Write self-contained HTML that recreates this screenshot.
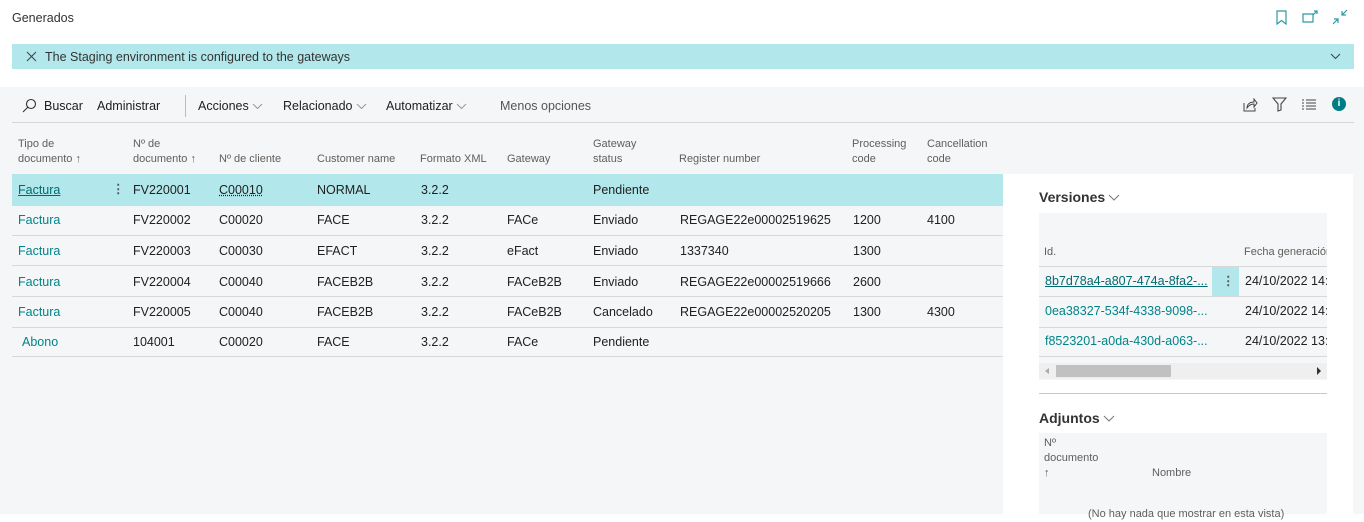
<!DOCTYPE html>
<html><head><meta charset="utf-8"><style>
*{margin:0;padding:0;box-sizing:border-box}
body{width:1364px;height:514px;overflow:hidden;background:#fff;font-family:"Liberation Sans",sans-serif;color:#212121;position:relative;font-size:12.5px}
.a{position:absolute;white-space:nowrap}
.h{color:#605e5c;font-size:11px;line-height:15px}
.lnk{color:#008489}
.t{font-size:12.5px}
.cv{display:inline-block;vertical-align:middle;margin-left:3px}
</style></head><body>
<div class="a" style="left:12px;top:11px;font-size:12.5px;color:#333">Generados</div>
<svg class="a" style="left:1275px;top:10px" width="14" height="15" viewBox="0 0 14 15"><path d="M2 1h9v13l-4.5-3.5L2 14z" fill="none" stroke="#2b9aa3" stroke-width="1.2"/></svg>
<svg class="a" style="left:1302px;top:10px" width="16" height="14" viewBox="0 0 16 14"><path d="M1 4h10v8H1z M12 1l3 0 0 3 M15 1l-4 4" fill="none" stroke="#2b9aa3" stroke-width="1.2"/></svg>
<svg class="a" style="left:1332px;top:9px" width="16" height="16" viewBox="0 0 16 16"><path d="M15 1l-5 5 M10 2v4h4 M1 15l5-5 M6 14v-4H2" fill="none" stroke="#2b9aa3" stroke-width="1.2"/></svg>
<div class="a" style="left:12px;top:44px;width:1342px;height:25px;background:#b2e8ec"></div>
<svg class="a" style="left:26px;top:51px" width="11" height="11" viewBox="0 0 11 11"><path d="M1 1l9 9M10 1l-9 9" stroke="#444" stroke-width="1.1"/></svg>
<div class="a" style="left:45px;top:50px;font-size:12.5px;color:#333">The Staging environment is configured to the gateways</div>
<svg class="a" style="left:1330px;top:53px" width="11" height="7" viewBox="0 0 11 7"><path d="M1 1l4.5 4.5L10 1" fill="none" stroke="#444" stroke-width="1.1"/></svg>
<div class="a" style="left:0;top:87px;width:1364px;height:427px;background:#f5f6f8"></div>
<svg class="a" style="left:22px;top:98px" width="15" height="15" viewBox="0 0 15 15"><circle cx="9" cy="6" r="4.5" fill="none" stroke="#333" stroke-width="1.1"/><path d="M6 9l-5 5" stroke="#333" stroke-width="1.1"/></svg>
<div class="a t" style="left:44px;top:99px">Buscar</div>
<div class="a t" style="left:97px;top:99px">Administrar</div>
<div class="a" style="left:185px;top:95px;width:1px;height:22px;background:#bbb"></div>
<div class="a t" style="left:198px;top:99px">Acciones<svg class="cv" width="11" height="7" viewBox="0 0 11 7"><path d="M1 1l4.5 4.5L10 1" fill="none" stroke="#999" stroke-width="1"/></svg></div>
<div class="a t" style="left:283px;top:99px">Relacionado<svg class="cv" width="11" height="7" viewBox="0 0 11 7"><path d="M1 1l4.5 4.5L10 1" fill="none" stroke="#999" stroke-width="1"/></svg></div>
<div class="a t" style="left:386px;top:99px">Automatizar<svg class="cv" width="11" height="7" viewBox="0 0 11 7"><path d="M1 1l4.5 4.5L10 1" fill="none" stroke="#999" stroke-width="1"/></svg></div>
<div class="a t" style="left:500px;top:99px;color:#555">Menos opciones</div>
<svg class="a" style="left:1243px;top:98px" width="15" height="14" viewBox="0 0 15 14"><path d="M1 5v8h11v-3 M4 10c0-4 3-6 7-6V1l3 4-3 4V6c-3 0-5 1-7 4z" fill="none" stroke="#444" stroke-width="1"/></svg>
<svg class="a" style="left:1272px;top:97px" width="15" height="15" viewBox="0 0 15 15"><path d="M1 1h13L9 7v6l-3 1V7z" fill="none" stroke="#444" stroke-width="1.1"/></svg>
<svg class="a" style="left:1302px;top:99px" width="14" height="11" viewBox="0 0 14 11"><path d="M0 1h2M4 1h10M0 4h2M4 4h10M0 7h2M4 7h10M0 10h2M4 10h10" stroke="#444" stroke-width="1"/></svg>
<div class="a" style="left:1332px;top:97px;width:14px;height:14px;border-radius:50%;background:#007c86;color:#fff;font-size:10px;font-weight:bold;text-align:center;line-height:14px">i</div>
<div class="a" style="left:12px;top:122px;width:1342px;height:1px;background:#d6d6d6"></div>
<div class="a h" style="left:18px;top:137px">Tipo de<br>documento ↑</div>
<div class="a h" style="left:133px;top:137px">Nº de<br>documento ↑</div>
<div class="a h" style="left:219px;top:152px">Nº de cliente</div>
<div class="a h" style="left:317px;top:152px">Customer name</div>
<div class="a h" style="left:420px;top:152px">Formato XML</div>
<div class="a h" style="left:507px;top:152px">Gateway</div>
<div class="a h" style="left:593px;top:137px">Gateway<br>status</div>
<div class="a h" style="left:679px;top:152px">Register number</div>
<div class="a h" style="left:852px;top:137px">Processing<br>code</div>
<div class="a h" style="left:927px;top:137px">Cancellation<br>code</div>
<div class="a" style="left:12px;top:174px;width:991px;height:31px;background:#b2e8ec"></div>
<div class="a" style="left:12px;top:205px;width:991px;height:1px;background:#d8d8d8"></div>
<div class="a" style="left:12px;top:235px;width:991px;height:1px;background:#d8d8d8"></div>
<div class="a" style="left:12px;top:265px;width:991px;height:1px;background:#d8d8d8"></div>
<div class="a" style="left:12px;top:296px;width:991px;height:1px;background:#d8d8d8"></div>
<div class="a" style="left:12px;top:327px;width:991px;height:1px;background:#d8d8d8"></div>
<div class="a" style="left:12px;top:356px;width:991px;height:1px;background:#d8d8d8"></div>
<div class="a t" style="left:112px;top:181px;color:#555;font-weight:bold">⋮</div>
<div class="a t lnk" style="left:18px;top:183px;text-decoration:underline;color:#006a70">Factura</div>
<div class="a t" style="left:133px;top:183px">FV220001</div><div class="a t" style="left:219px;top:183px;text-decoration:underline dotted">C00010</div><div class="a t" style="left:317px;top:183px">NORMAL</div><div class="a t" style="left:421px;top:183px">3.2.2</div><div class="a t" style="left:593px;top:183px">Pendiente</div>

<div class="a t lnk" style="left:18px;top:213px">Factura</div><div class="a t" style="left:133px;top:213px">FV220002</div><div class="a t" style="left:219px;top:213px">C00020</div><div class="a t" style="left:317px;top:213px">FACE</div><div class="a t" style="left:421px;top:213px">3.2.2</div><div class="a t" style="left:507px;top:213px">FACe</div><div class="a t" style="left:593px;top:213px">Enviado</div><div class="a t" style="left:680px;top:213px">REGAGE22e00002519625</div><div class="a t" style="left:853px;top:213px">1200</div><div class="a t" style="left:927px;top:213px">4100</div>

<div class="a t lnk" style="left:18px;top:244px">Factura</div><div class="a t" style="left:133px;top:244px">FV220003</div><div class="a t" style="left:219px;top:244px">C00030</div><div class="a t" style="left:317px;top:244px">EFACT</div><div class="a t" style="left:421px;top:244px">3.2.2</div><div class="a t" style="left:507px;top:244px">eFact</div><div class="a t" style="left:593px;top:244px">Enviado</div><div class="a t" style="left:680px;top:244px">1337340</div><div class="a t" style="left:853px;top:244px">1300</div>

<div class="a t lnk" style="left:18px;top:275px">Factura</div><div class="a t" style="left:133px;top:275px">FV220004</div><div class="a t" style="left:219px;top:275px">C00040</div><div class="a t" style="left:317px;top:275px">FACEB2B</div><div class="a t" style="left:421px;top:275px">3.2.2</div><div class="a t" style="left:507px;top:275px">FACeB2B</div><div class="a t" style="left:593px;top:275px">Enviado</div><div class="a t" style="left:680px;top:275px">REGAGE22e00002519666</div><div class="a t" style="left:853px;top:275px">2600</div>

<div class="a t lnk" style="left:18px;top:305px">Factura</div><div class="a t" style="left:133px;top:305px">FV220005</div><div class="a t" style="left:219px;top:305px">C00040</div><div class="a t" style="left:317px;top:305px">FACEB2B</div><div class="a t" style="left:421px;top:305px">3.2.2</div><div class="a t" style="left:507px;top:305px">FACeB2B</div><div class="a t" style="left:593px;top:305px">Cancelado</div><div class="a t" style="left:680px;top:305px">REGAGE22e00002520205</div><div class="a t" style="left:853px;top:305px">1300</div><div class="a t" style="left:927px;top:305px">4300</div>

<div class="a t lnk" style="left:22px;top:335px">Abono</div><div class="a t" style="left:133px;top:335px">104001</div><div class="a t" style="left:219px;top:335px">C00020</div><div class="a t" style="left:317px;top:335px">FACE</div><div class="a t" style="left:421px;top:335px">3.2.2</div><div class="a t" style="left:507px;top:335px">FACe</div><div class="a t" style="left:593px;top:335px">Pendiente</div>

<div class="a" style="left:1003px;top:174px;width:350px;height:340px;background:#fff"></div>
<div class="a" style="left:1039px;top:189px;font-size:14px;font-weight:bold;color:#333">Versiones<svg class="cv" width="12" height="8" viewBox="0 0 12 8"><path d="M1 1l5 5 5-5" fill="none" stroke="#777" stroke-width="1"/></svg></div>
<div class="a" style="left:1039px;top:213px;width:288px;height:167px;background:#f5f6f8"></div>
<div class="a h" style="left:1044px;top:245px">Id.</div>
<div class="a h" style="left:1244px;top:245px;width:83px;overflow:hidden">Fecha generación</div>
<div class="a" style="left:1039px;top:266px;width:288px;height:1px;background:#d8d8d8"></div>
<div class="a" style="left:1212px;top:267px;width:27px;height:29px;background:#b2e8ec"></div>
<div class="a t" style="left:1222px;top:273px;color:#555;font-weight:bold">⋮</div>
<div class="a" style="left:1039px;top:296px;width:288px;height:1px;background:#d8d8d8"></div>
<div class="a" style="left:1039px;top:327px;width:288px;height:1px;background:#d8d8d8"></div>
<div class="a" style="left:1039px;top:356px;width:288px;height:1px;background:#d8d8d8"></div>
<div class="a t" style="left:1045px;top:274px;color:#006a70;text-decoration:underline">8b7d78a4-a807-474a-8fa2-...</div>
<div class="a t lnk" style="left:1045px;top:304px">0ea38327-534f-4338-9098-...</div>
<div class="a t lnk" style="left:1045px;top:334px">f8523201-a0da-430d-a063-...</div>
<div class="a" style="left:1245px;top:274px;width:82px;overflow:hidden;font-size:12.5px">24/10/2022 14:</div>
<div class="a" style="left:1245px;top:304px;width:82px;overflow:hidden;font-size:12.5px">24/10/2022 14:</div>
<div class="a" style="left:1245px;top:334px;width:82px;overflow:hidden;font-size:12.5px">24/10/2022 13:</div>
<div class="a" style="left:1039px;top:363px;width:288px;height:16px;background:#efefef"></div>
<div class="a" style="left:1056px;top:365px;width:115px;height:12px;background:#c1c1c1"></div>
<div class="a" style="left:1045px;top:368px;width:0;height:0;border-top:3px solid transparent;border-bottom:3px solid transparent;border-right:4px solid #aaa"></div>
<div class="a" style="left:1317px;top:367px;width:0;height:0;border-top:4px solid transparent;border-bottom:4px solid transparent;border-left:4px solid #333"></div>
<div class="a" style="left:1039px;top:393px;width:288px;height:1px;background:#c8c8c8"></div>
<div class="a" style="left:1039px;top:410px;font-size:14px;font-weight:bold;color:#333">Adjuntos<svg class="cv" width="12" height="8" viewBox="0 0 12 8"><path d="M1 1l5 5 5-5" fill="none" stroke="#777" stroke-width="1"/></svg></div>
<div class="a" style="left:1039px;top:433px;width:288px;height:81px;background:#f5f6f8"></div>
<div class="a h" style="left:1044px;top:436px;line-height:15px">Nº<br>documento<br>↑</div>
<div class="a h" style="left:1152px;top:466px">Nombre</div>
<div class="a h" style="left:1088px;top:507px">(No hay nada que mostrar en esta vista)</div>
</body></html>
